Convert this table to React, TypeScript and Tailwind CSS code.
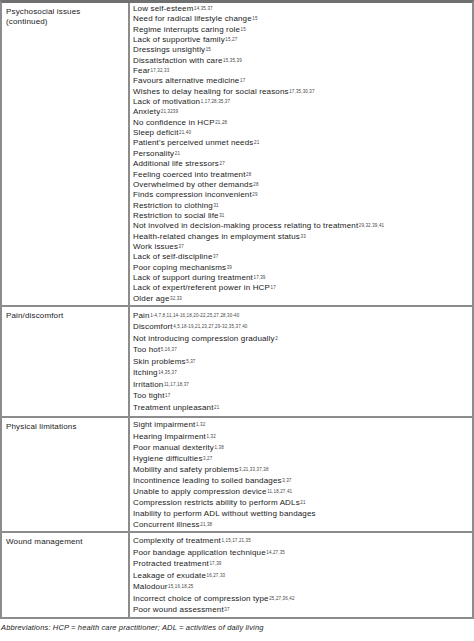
type Item = {
  text: string;
  refs?: string;
}

type Section = {
  title: string[];
  leading: string;
  pad: string;
  items: Array<Item>;
}

const sections: Array<Section> = [
  {
    title: ["Psychosocial issues", "(continued)"],
    leading: "leading-[10.35px]",
    pad: "pt-[1px] pb-[1px]",
    items: [
      { text: "Low self-esteem", refs: "14,35,37" },
      { text: "Need for radical lifestyle change", refs: "15" },
      { text: "Regime interrupts caring role", refs: "15" },
      { text: "Lack of supportive family", refs: "15,27" },
      { text: "Dressings unsightly", refs: "15" },
      { text: "Dissatisfaction with care", refs: "15,35,39" },
      { text: "Fear", refs: "17,32,33" },
      { text: "Favours alternative medicine", refs: "17" },
      { text: "Wishes to delay healing for social reasons", refs: "17,35,30,37" },
      { text: "Lack of motivation", refs: "1,17,28,35,37" },
      { text: "Anxiety", refs: "21,3239" },
      { text: "No confidence in HCP", refs: "21,28" },
      { text: "Sleep deficit", refs: "21,40" },
      { text: "Patient's perceived unmet needs", refs: "21" },
      { text: "Personality", refs: "21" },
      { text: "Additional life stressors", refs: "27" },
      { text: "Feeling coerced into treatment", refs: "28" },
      { text: "Overwhelmed by other demands", refs: "28" },
      { text: "Finds compression inconvenient", refs: "29" },
      { text: "Restriction to clothing", refs: "31" },
      { text: "Restriction to social life", refs: "31" },
      { text: "Not involved in decision-making process relating to treatment", refs: "29,32,39,41" },
      { text: "Health-related changes in employment status", refs: "33" },
      { text: "Work issues", refs: "37" },
      { text: "Lack of self-discipline", refs: "37" },
      { text: "Poor coping mechanisms", refs: "39" },
      { text: "Lack of support during treatment", refs: "17,39" },
      { text: "Lack of expert/referent power in HCP", refs: "17" },
      { text: "Older age", refs: "32,33" },
    ],
  },
  {
    title: ["Pain/discomfort"],
    leading: "leading-[11.5px]",
    pad: "pt-[3px] pb-[3px]",
    items: [
      { text: "Pain", refs: "1-4,7,8,11,14-16,18,20-22,25,27,28,30-40" },
      { text: "Discomfort", refs: "4,5,18-19,21,23,27,29-32,35,37,40" },
      { text: "Not introducing compression gradually", refs: "2" },
      { text: "Too hot", refs: "5,16,37" },
      { text: "Skin problems", refs: "5,37" },
      { text: "Itching", refs: "14,35,37" },
      { text: "Irritation", refs: "11,17,18,37" },
      { text: "Too tight", refs: "17" },
      { text: "Treatment unpleasant", refs: "21" },
    ],
  },
  {
    title: ["Physical limitations"],
    leading: "leading-[11.1px]",
    pad: "pt-[1px] pb-[1px]",
    items: [
      { text: "Sight impairment", refs: "1,32" },
      { text: "Hearing Impairment", refs: "1,32" },
      { text: "Poor manual dexterity", refs: "1,38" },
      { text: "Hygiene difficulties", refs: "3,27" },
      { text: "Mobility and safety problems", refs: "3,21,33,37,38" },
      { text: "Incontinence leading to soiled bandages", refs: "3,37" },
      { text: "Unable to apply compression device", refs: "11,18,27,41" },
      { text: "Compression restricts ability to perform ADLs", refs: "21" },
      { text: "Inability to perform ADL without wetting bandages" },
      { text: "Concurrent illness", refs: "21,38" },
    ],
  },
  {
    title: ["Wound management"],
    leading: "leading-[11.5px]",
    pad: "pt-[2px] pb-[1px]",
    items: [
      { text: "Complexity of treatment", refs: "1,15,17,21,35" },
      { text: "Poor bandage application technique", refs: "14,27,35" },
      { text: "Protracted treatment", refs: "17,39" },
      { text: "Leakage of exudate", refs: "16,27,33" },
      { text: "Malodour", refs: "15,16,18,25" },
      { text: "Incorrect choice of compression type", refs: "25,27,36,42" },
      { text: "Poor wound assessment", refs: "37" },
    ],
  },
]

function Row({ section, first }: { section: Section; first: boolean }) {
  return (
    <div className={`flex ${first ? "" : "border-t-2 border-[#8c8c8c]"}`}>
      <div className="w-[128px] shrink-0 border-r-2 border-[#8c8c8c] pl-[4px] pt-[4px] text-[8px] leading-[10px]">
        {section.title.map((t) => (
          <div key={t}>{t}</div>
        ))}
      </div>
      <ul className={`flex-1 pl-[3px] ${section.pad} text-[8px] ${section.leading}`}>
        {section.items.map((item) => (
          <li key={item.text} className="whitespace-nowrap">
            {item.text}
            {item.refs && (
              <sup className="relative -top-[1px] ml-[0.5px] align-baseline text-[4.5px] leading-none text-[#444]">
                {item.refs}
              </sup>
            )}
          </li>
        ))}
      </ul>
    </div>
  )
}

export default function App() {
  return (
    <div className="h-[641px] w-[474px] overflow-hidden bg-white text-[#1a1a1a] font-['Liberation_Sans',Arial,sans-serif] tracking-[0.15px]">
      <div className="w-[474px] border-x-2 border-b-2 border-t-[3px] border-[#8c8c8c] border-t-[#707070]">
        {sections.map((s, i) => (
          <Row key={s.title[0]} section={s} first={i === 0} />
        ))}
      </div>
      <p className="pl-[1px] pt-[4px] text-[7.5px] italic leading-[10px]">
        Abbreviations: HCP = health care practitioner; ADL = activities of daily living
      </p>
    </div>
  )
}
